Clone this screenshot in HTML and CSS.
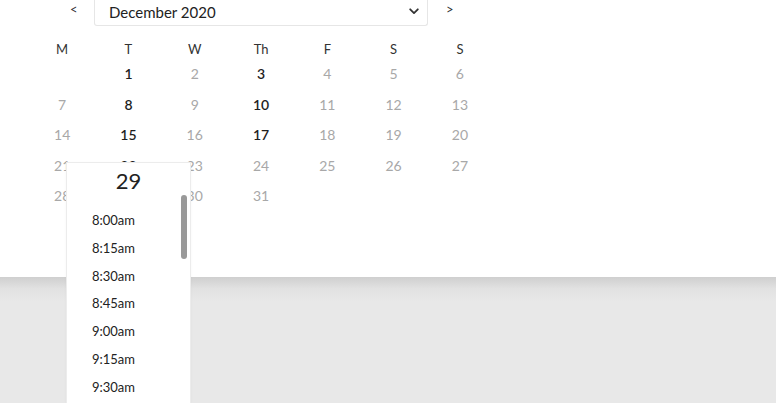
FILE: index.html
```html
<!DOCTYPE html>
<html>
<head>
<meta charset="utf-8">
<link rel="stylesheet" href="styles.css">
</head>
<body>
<div class="page">
  <section class="panel">
    <div class="cal-head">
      <span class="nav prev">&lt;</span>
      <div class="month-select">
        <span class="month-label">December 2020</span>
        <svg class="chev" width="10" height="7" viewBox="0 0 10 7"><path d="M1.2 1.3 L5 5.1 L8.8 1.3" fill="none" stroke="#333" stroke-width="1.8" stroke-linecap="round" stroke-linejoin="round"/></svg>
      </div>
      <span class="nav next">&gt;</span>
    </div>
    <div class="cal-grid">
      <div class="dow">M</div><div class="dow">T</div><div class="dow">W</div><div class="dow">Th</div><div class="dow">F</div><div class="dow">S</div><div class="dow">S</div>
      <div class="day"></div><div class="day on">1</div><div class="day">2</div><div class="day on">3</div><div class="day">4</div><div class="day">5</div><div class="day">6</div>
      <div class="day">7</div><div class="day on">8</div><div class="day">9</div><div class="day on">10</div><div class="day">11</div><div class="day">12</div><div class="day">13</div>
      <div class="day">14</div><div class="day on">15</div><div class="day">16</div><div class="day on">17</div><div class="day">18</div><div class="day">19</div><div class="day">20</div>
      <div class="day">21</div><div class="day on">22</div><div class="day">23</div><div class="day">24</div><div class="day">25</div><div class="day">26</div><div class="day">27</div>
      <div class="day">28</div><div class="day on">29</div><div class="day">30</div><div class="day">31</div><div class="day"></div><div class="day"></div><div class="day"></div>
    </div>
    <div class="time-pop">
      <div class="pop-day">29</div>
      <div class="times">
        <div class="time">8:00am</div>
        <div class="time">8:15am</div>
        <div class="time">8:30am</div>
        <div class="time">8:45am</div>
        <div class="time">9:00am</div>
        <div class="time">9:15am</div>
        <div class="time">9:30am</div>
      </div>
      <div class="scroll-thumb"></div>
    </div>
  </section>
  <section class="backdrop"></section>
</div>
</body>
</html>
```
FILE: styles.css
```css
html, body {
  margin: 0;
  padding: 0;
  height: 100%;
  overflow: hidden;
}
body {
  font-family: "Source Sans Pro", "Lato", "Open Sans", sans-serif;
  color: #222;
  background: #e8e8e8;
}
.page {
  display: flex;
  flex-direction: column;
  height: 403px;
}
.panel {
  position: relative;
  background: #fff;
  height: 277px;
  flex: none;
}
.cal-head {
  display: flex;
  align-items: center;
  height: 26px;
  padding-left: 70px;
}
.nav {
  font-size: 13px;
  color: #333;
  width: 24px;
  margin-top: -8px;
}
.next {
  margin-left: 18px;
}
.month-select {
  box-sizing: border-box;
  width: 334px;
  height: 40px;
  margin-top: -14px;
  border: 1px solid #e6e6e6;
  border-top: none;
  border-radius: 0 0 3px 3px;
  display: flex;
  align-items: center;
  justify-content: space-between;
  padding: 12px 8px 0 14px;
}
.month-label {
  font-size: 15px;
  color: #222;
}
.cal-grid {
  display: grid;
  grid-template-columns: repeat(7, 66.3px);
  grid-template-rows: 19.5px;
  grid-auto-rows: 30.5px;
  margin-left: 29px;
  margin-top: 13px;
  width: 464px;
}
.dow, .day {
  display: flex;
  align-items: center;
  justify-content: center;
  font-size: 13px;
}
.dow {
  color: #333;
}
.day {
  color: #a8a8a8;
  font-size: 14px;
}
.day.on {
  color: #1e1e1e;
  font-weight: 600;
}
.time-pop {
  position: absolute;
  left: 67px;
  top: 163px;
  width: 123px;
  height: 240px;
  overflow: hidden;
  background: #fff;
  box-shadow: 0 0 0 1px #ececec, 0 1px 3px rgba(0,0,0,0.08);
  z-index: 2;
}
.pop-day {
  text-align: center;
  font-size: 22px;
  color: #222;
  height: 36px;
  line-height: 36px;
}
.times {
  padding-left: 25px;
  padding-top: 8px;
}
.time {
  font-size: 13px;
  height: 27.8px;
  line-height: 27.8px;
  color: #222;
}
.scroll-thumb {
  position: absolute;
  right: 3px;
  top: 32px;
  width: 6px;
  height: 64px;
  border-radius: 3px;
  background: #999;
}
.backdrop {
  flex: 1;
  background: linear-gradient(to bottom, #cfcfcf 0px, #e2e2e2 12px, #e8e8e8 24px, #e8e8e8 100%);
}
```
